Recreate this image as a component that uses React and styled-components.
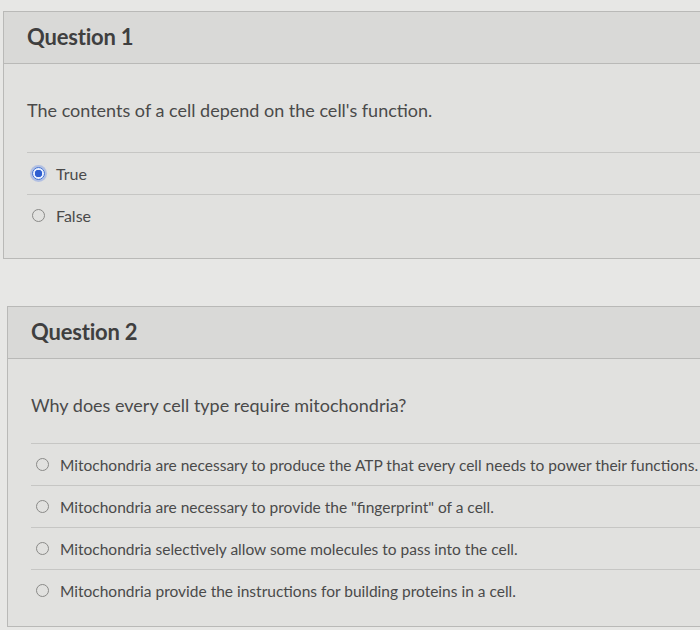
import React from 'react';
import styled, { createGlobalStyle } from 'styled-components';

const GlobalStyle = createGlobalStyle`
  html, body {
    margin: 0;
    padding: 0;
    background: #e7e7e5;
    overflow: hidden;
  }
  body {
    font-family: Lato, "Open Sans", "Liberation Sans", sans-serif;
    color: #4a4a4a;
  }
`;

const Page = styled.div`
  width: 700px;
  height: 630px;
  overflow: hidden;
  padding-top: 11px;
  box-sizing: border-box;
  display: flex;
  flex-direction: column;
  gap: 47px;
`;

const Card = styled.section`
  margin-left: ${(p) => p.$left}px;
  width: 760px;
  flex-shrink: 0;
  border: 1px solid #b9b9b7;
  background: #e1e1df;
`;

const Header = styled.header`
  height: 51px;
  display: flex;
  align-items: center;
  padding-left: 23px;
  background: #d9d9d7;
  border-bottom: 1px solid #b9b9b7;
`;

const Title = styled.h2`
  margin: 0 0 2px;
  font-size: 22px;
  font-weight: 700;
  color: #3f3f3f;
  letter-spacing: -0.2px;
`;

const Body = styled.div`
  padding: 34px 0 ${(p) => p.$bottom}px 23px;
`;

const Prompt = styled.p`
  margin: 0 0 ${(p) => p.$gap}px;
  font-size: 18px;
  line-height: 24px;
  color: #4a4a4a;
`;

const Answers = styled.ul`
  list-style: none;
  margin: 0;
  padding: 0;
`;

const Answer = styled.li`
  box-sizing: border-box;
  height: 42px;
  display: flex;
  align-items: center;
  gap: 11px;
  padding-left: 5px;
  border-top: 1px solid #c6c6c4;
  font-size: ${(p) => p.$size}px;
  color: #4a4a4a;
  white-space: nowrap;
`;

const Radio = styled.span`
  width: 13px;
  height: 13px;
  flex-shrink: 0;
  border-radius: 50%;
  box-sizing: border-box;
  border: 1.5px solid ${(p) => (p.$checked ? '#3d6fd6' : '#8a8a88')};
  background: ${(p) => (p.$checked ? 'radial-gradient(circle, #2f5fd0 0 3.5px, #e8eefc 4px)' : 'transparent')};
  box-shadow: ${(p) => (p.$checked ? '0 0 0 2px rgba(120, 150, 230, 0.45)' : 'none')};
`;

const questions = [
  {
    title: 'Question 1',
    left: 3,
    prompt: "The contents of a cell depend on the cell's function.",
    gap: 30,
    bottom: 22,
    size: 16,
    answers: [
      { text: 'True', checked: true },
      { text: 'False' },
    ],
  },
  {
    title: 'Question 2',
    left: 7,
    prompt: 'Why does every cell type require mitochondria?',
    gap: 26,
    bottom: 15,
    size: 15.5,
    answers: [
      { text: 'Mitochondria are necessary to produce the ATP that every cell needs to power their functions.' },
      { text: 'Mitochondria are necessary to provide the "fingerprint" of a cell.' },
      { text: 'Mitochondria selectively allow some molecules to pass into the cell.' },
      { text: 'Mitochondria provide the instructions for building proteins in a cell.' },
    ],
  },
];

export default function App() {
  return (
    <>
      <GlobalStyle />
      <Page>
        {questions.map((q) => (
          <Card key={q.title} $left={q.left}>
            <Header>
              <Title>{q.title}</Title>
            </Header>
            <Body $bottom={q.bottom}>
              <Prompt $gap={q.gap}>{q.prompt}</Prompt>
              <Answers>
                {q.answers.map((a) => (
                  <Answer key={a.text} $size={q.size}>
                    <Radio $checked={a.checked} />
                    {a.text}
                  </Answer>
                ))}
              </Answers>
            </Body>
          </Card>
        ))}
      </Page>
    </>
  );
}
